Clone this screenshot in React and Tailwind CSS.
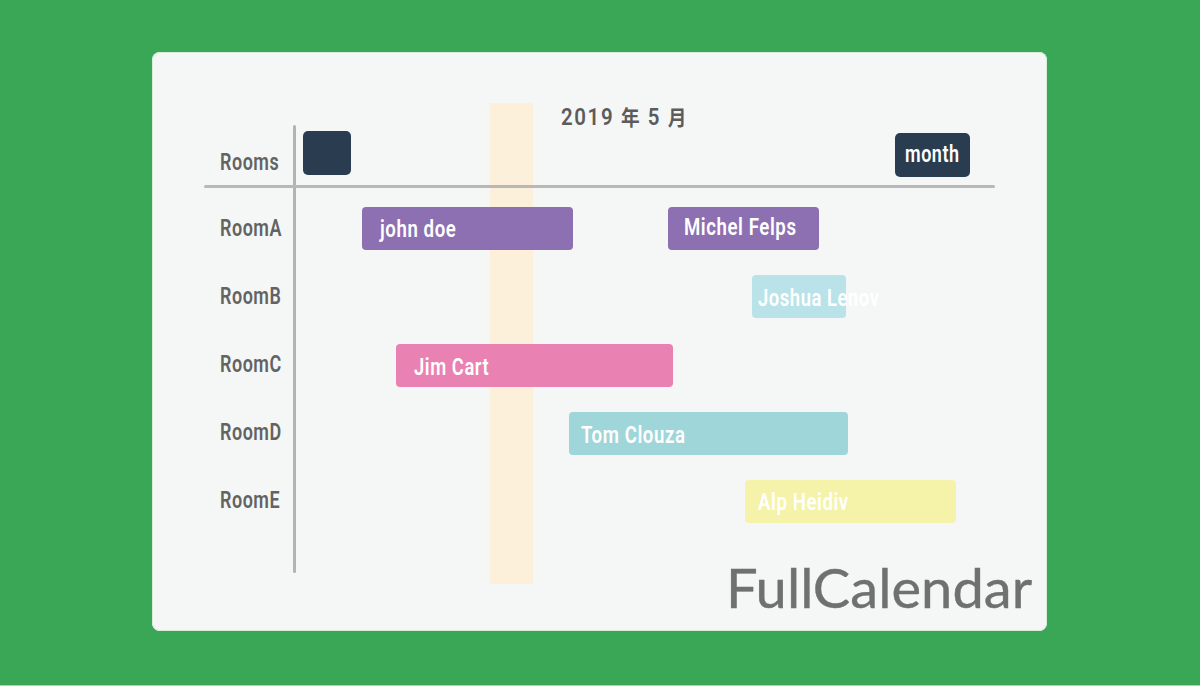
const labelFont = "relative top-px block origin-left whitespace-nowrap font-['Roboto',sans-serif] text-[23px] leading-6 tracking-[0.7px]";

const rooms = [
  {
    name: "RoomA",
    events: [
      { title: "john doe", box: "ml-[66px] w-[211px] bg-[#8d70b2] pl-[18px] pt-[10px]", scale: "scale-x-[0.81]" },
      { title: "Michel Felps", box: "ml-[95px] w-[151px] bg-[#8d70b2] pl-[16px] pt-[8px]", scale: "scale-x-[0.81]" },
    ],
  },
  {
    name: "RoomB",
    events: [{ title: "Joshua Lenov", box: "ml-[456px] w-[94px] bg-[#bae3e9] pl-[6px] pt-[11px]", scale: "scale-x-[0.8]" }],
  },
  {
    name: "RoomC",
    events: [{ title: "Jim Cart", box: "ml-[100px] w-[277px] bg-[#e982b2] pl-[18px] pt-[11px]", scale: "scale-x-[0.8]" }],
  },
  {
    name: "RoomD",
    events: [{ title: "Tom Clouza", box: "ml-[273px] w-[279px] bg-[#9fd6da] pl-[12px] pt-[11px]", scale: "scale-x-[0.81]" }],
  },
  {
    name: "RoomE",
    events: [{ title: "Alp Heidiv", box: "ml-[449px] w-[211px] bg-[#f5f3aa] pl-[13px] pt-[10px]", scale: "scale-x-[0.81]" }],
  },
];

function Label({ scale, children }) {
  return <span className={`${labelFont} ${scale}`}>{children}</span>;
}

function Header() {
  return (
    <header className="relative flex h-[133px] items-start">
      <div className="mt-[98px] w-[89px] pl-[16px] font-semibold text-[#636363]">
        <Label scale="scale-x-[0.78]">Rooms</Label>
      </div>
      <div className="mt-[73px] h-[60px] w-[3px] rounded-t-full bg-[#b3b3b3]" />
      <button aria-label="Today" className="mt-[79px] ml-[7px] h-[44px] w-[48px] rounded-[5px] bg-[#2a3d50]" />
      <h1 className="mt-[52px] ml-[210px] w-[126px] origin-left scale-x-[0.89] font-['Roboto','Noto_Sans_CJK_JP',sans-serif] text-[23px] leading-7 font-semibold tracking-[1.8px] whitespace-nowrap text-[#5c5c5c]">
        2019 <span className="text-[21px] font-bold">年</span> 5 <span className="text-[21px] font-bold">月</span>
      </h1>
      <button className="mt-[81px] ml-[208px] h-[44px] w-[75px] rounded-[5px] bg-[#2a3d50] pb-[2px] pl-[10px] text-left font-semibold text-white">
        <Label scale="scale-x-[0.78]">month</Label>
      </button>
    </header>
  );
}

function Schedule() {
  return (
    <section className="relative flex h-[385px]">
      <div className="flex w-[89px] flex-col gap-[44px] pt-[28px] pl-[16px] font-semibold text-[#636363]">
        {rooms.map((room) => (
          <Label key={room.name} scale="scale-x-[0.78]">{room.name}</Label>
        ))}
      </div>
      <div className="w-[3px] rounded-b-full bg-[#b3b3b3]" />
      <div className="flex flex-1 flex-col gap-[25.2px] pt-[19.3px]">
        {rooms.map((room) => (
          <div key={room.name} className="flex h-[43px]">
            {room.events.map((event) => (
              <div key={event.title} className={`h-[43px] shrink-0 rounded-[4px] font-semibold text-white ${event.box}`}>
                <Label scale={event.scale}>{event.title}</Label>
              </div>
            ))}
          </div>
        ))}
      </div>
    </section>
  );
}

export default function App() {
  return (
    <div className="h-[686px] w-[1200px] overflow-hidden border-b border-[#a5d6b0] bg-[#3aa757] pt-[52px] pl-[152px]">
      <main className="relative h-[579px] w-[895px] rounded-[8px] bg-[#f5f7f7] px-[52px] shadow-[inset_0_0_0_1px_#d5eedb]">
        <div className="absolute top-[51px] left-[338px] h-[481px] w-[43px] bg-[#fcf0da]" />
        <Header />
        <div className="relative h-[3px] rounded-full bg-[#b8b8b8]" />
        <Schedule />
        <div className="absolute top-[502px] left-[574px] origin-left scale-x-[1.02] font-['Lato',sans-serif] text-[55px] leading-[66px] font-normal whitespace-nowrap text-[#707070] [-webkit-text-stroke:0.4px_#707070]">
          FullCalendar
        </div>
      </main>
    </div>
  );
}
